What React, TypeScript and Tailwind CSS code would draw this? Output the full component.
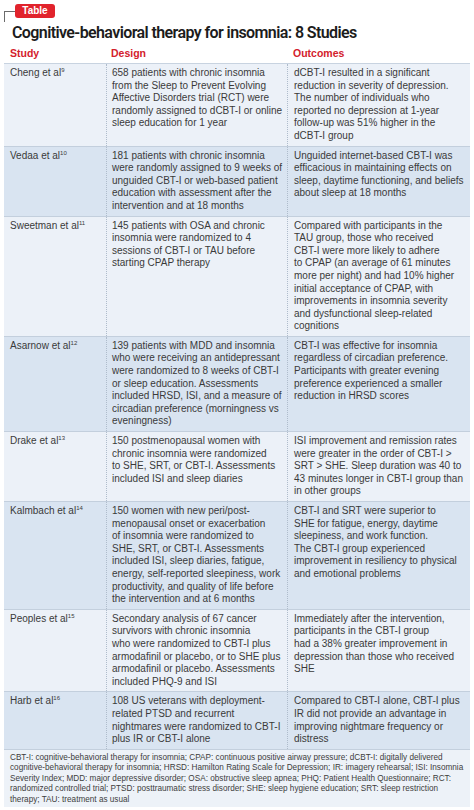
import React from "react";

type Row = { study: string; sup: string; design: string[]; outcomes: string[] };

const rows: Row[] = [
  {
    study: "Cheng et al",
    sup: "9",
    design: [
      "658 patients with chronic insomnia",
      "from the Sleep to Prevent Evolving",
      "Affective Disorders trial (RCT) were",
      "randomly assigned to dCBT-I or online",
      "sleep education for 1 year",
    ],
    outcomes: [
      "dCBT-I resulted in a significant",
      "reduction in severity of depression.",
      "The number of individuals who",
      "reported no depression at 1-year",
      "follow-up was 51% higher in the",
      "dCBT-I group",
    ],
  },
  {
    study: "Vedaa et al",
    sup: "10",
    design: [
      "181 patients with chronic insomnia",
      "were randomly assigned to 9 weeks of",
      "unguided CBT-I or web-based patient",
      "education with assessment after the",
      "intervention and at 18 months",
    ],
    outcomes: [
      "Unguided internet-based CBT-I was",
      "efficacious in maintaining effects on",
      "sleep, daytime functioning, and beliefs",
      "about sleep at 18 months",
    ],
  },
  {
    study: "Sweetman et al",
    sup: "11",
    design: [
      "145 patients with OSA and chronic",
      "insomnia were randomized to 4",
      "sessions of CBT-I or TAU before",
      "starting CPAP therapy",
    ],
    outcomes: [
      "Compared with participants in the",
      "TAU group, those who received",
      "CBT-I were more likely to adhere",
      "to CPAP (an average of 61 minutes",
      "more per night) and had 10% higher",
      "initial acceptance of CPAP, with",
      "improvements in insomnia severity",
      "and dysfunctional sleep-related",
      "cognitions",
    ],
  },
  {
    study: "Asarnow et al",
    sup: "12",
    design: [
      "139 patients with MDD and insomnia",
      "who were receiving an antidepressant",
      "were randomized to 8 weeks of CBT-I",
      "or sleep education. Assessments",
      "included HRSD, ISI, and a measure of",
      "circadian preference (morningness vs",
      "eveningness)",
    ],
    outcomes: [
      "CBT-I was effective for insomnia",
      "regardless of circadian preference.",
      "Participants with greater evening",
      "preference experienced a smaller",
      "reduction in HRSD scores",
    ],
  },
  {
    study: "Drake et al",
    sup: "13",
    design: [
      "150 postmenopausal women with",
      "chronic insomnia were randomized",
      "to SHE, SRT, or CBT-I. Assessments",
      "included ISI and sleep diaries",
    ],
    outcomes: [
      "ISI improvement and remission rates",
      "were greater in the order of CBT-I >",
      "SRT > SHE. Sleep duration was 40 to",
      "43 minutes longer in CBT-I group than",
      "in other groups",
    ],
  },
  {
    study: "Kalmbach et al",
    sup: "14",
    design: [
      "150 women with new peri/post-",
      "menopausal onset or exacerbation",
      "of insomnia were randomized to",
      "SHE, SRT, or CBT-I. Assessments",
      "included ISI, sleep diaries, fatigue,",
      "energy, self-reported sleepiness, work",
      "productivity, and quality of life before",
      "the intervention and at 6 months",
    ],
    outcomes: [
      "CBT-I and SRT were superior to",
      "SHE for fatigue, energy, daytime",
      "sleepiness, and work function.",
      "The CBT-I group experienced",
      "improvement in resiliency to physical",
      "and emotional problems",
    ],
  },
  {
    study: "Peoples et al",
    sup: "15",
    design: [
      "Secondary analysis of 67 cancer",
      "survivors with chronic insomnia",
      "who were randomized to CBT-I plus",
      "armodafinil or placebo, or to SHE plus",
      "armodafinil or placebo. Assessments",
      "included PHQ-9 and ISI",
    ],
    outcomes: [
      "Immediately after the intervention,",
      "participants in the CBT-I group",
      "had a 38% greater improvement in",
      "depression than those who received",
      "SHE",
    ],
  },
  {
    study: "Harb et al",
    sup: "16",
    design: [
      "108 US veterans with deployment-",
      "related PTSD and recurrent",
      "nightmares were randomized to CBT-I",
      "plus IR or CBT-I alone",
    ],
    outcomes: [
      "Compared to CBT-I alone, CBT-I plus",
      "IR did not provide an advantage in",
      "improving nightmare frequency or",
      "distress",
    ],
  },
];

const footnote = [
  "CBT-I: cognitive-behavioral therapy for insomnia; CPAP: continuous positive airway pressure; dCBT-I: digitally delivered",
  "cognitive-behavioral therapy for insomnia; HRSD: Hamilton Rating Scale for Depression; IR: imagery rehearsal; ISI: Insomnia",
  "Severity Index; MDD: major depressive disorder; OSA: obstructive sleep apnea; PHQ: Patient Health Questionnaire; RCT:",
  "randomized controlled trial; PTSD: posttraumatic stress disorder; SHE: sleep hygiene education; SRT: sleep restriction",
  "therapy; TAU: treatment as usual",
];

function Lines({ lines }: { lines: string[] }) {
  return (
    <>
      {lines.map((l, i) => (
        <div key={i} className="whitespace-nowrap">
          {l}
        </div>
      ))}
    </>
  );
}

export default function App() {
  return (
    <div
      className="w-[474px] h-[810px] bg-white px-[4px] pt-[4px] overflow-hidden"
      style={{ fontFamily: '"Liberation Sans", Arial, sans-serif' }}
    >
      <div className="flex items-start h-[14px]">
        <div className="w-[11px] h-[11px] mt-[7px] border-l border-t border-[#6b6b6b]" />
        <div className="h-[14px] w-[40px] rounded-[3px] bg-[#e1232c] text-white text-[10px] font-bold leading-[14px] text-center">
          Table
        </div>
      </div>
      <div
        className="mt-[3px] h-[24px] pl-[8px] text-[16px] leading-[24px] font-semibold text-[#1c1c1c] whitespace-nowrap tracking-[-0.6px]"
        style={{ fontFamily: 'Roboto, "Open Sans", sans-serif' }}
      >
        Cognitive-behavioral therapy for insomnia: 8 Studies
      </div>
      <div className="grid grid-cols-[102px_181px_183px] h-[18px] text-[10.5px] leading-[16px] font-bold text-[#d3212c]">
        <div className="pl-[6px]">Study</div>
        <div className="pl-[5px]">Design</div>
        <div className="pl-[6px]">Outcomes</div>
      </div>
      <div className="text-[10px] leading-[12.6px] text-[#3a3a3a] border-t border-[#c8d3e0]">
        {rows.map((r, i) => (
          <div
            key={i}
            className={`grid grid-cols-[102px_181px_183px] border-b border-[#c3cfdd] ${
              i % 2 === 0 ? "bg-[#ecf1f8]" : "bg-[#d9e4f1]"
            }`}
          >
            <div className="pl-[6px] pt-[3px] pb-[3px] whitespace-nowrap">
              {r.study}
              <sup className="text-[6px] -top-[4px]">{r.sup}</sup>
            </div>
            <div className="pl-[5px] pt-[3px] pb-[3px] border-l border-dotted border-[#aebbcb]">
              <Lines lines={r.design} />
            </div>
            <div className="pl-[6px] pt-[3px] pb-[3px] border-l border-dotted border-[#aebbcb]">
              <Lines lines={r.outcomes} />
            </div>
          </div>
        ))}
      </div>
      <div className="bg-[#edf2f8] pl-[6px] pt-[3px] pb-[2px] text-[8.2px] leading-[10.5px] text-[#3d3d3d]">
        <Lines lines={footnote} />
      </div>
    </div>
  );
}
